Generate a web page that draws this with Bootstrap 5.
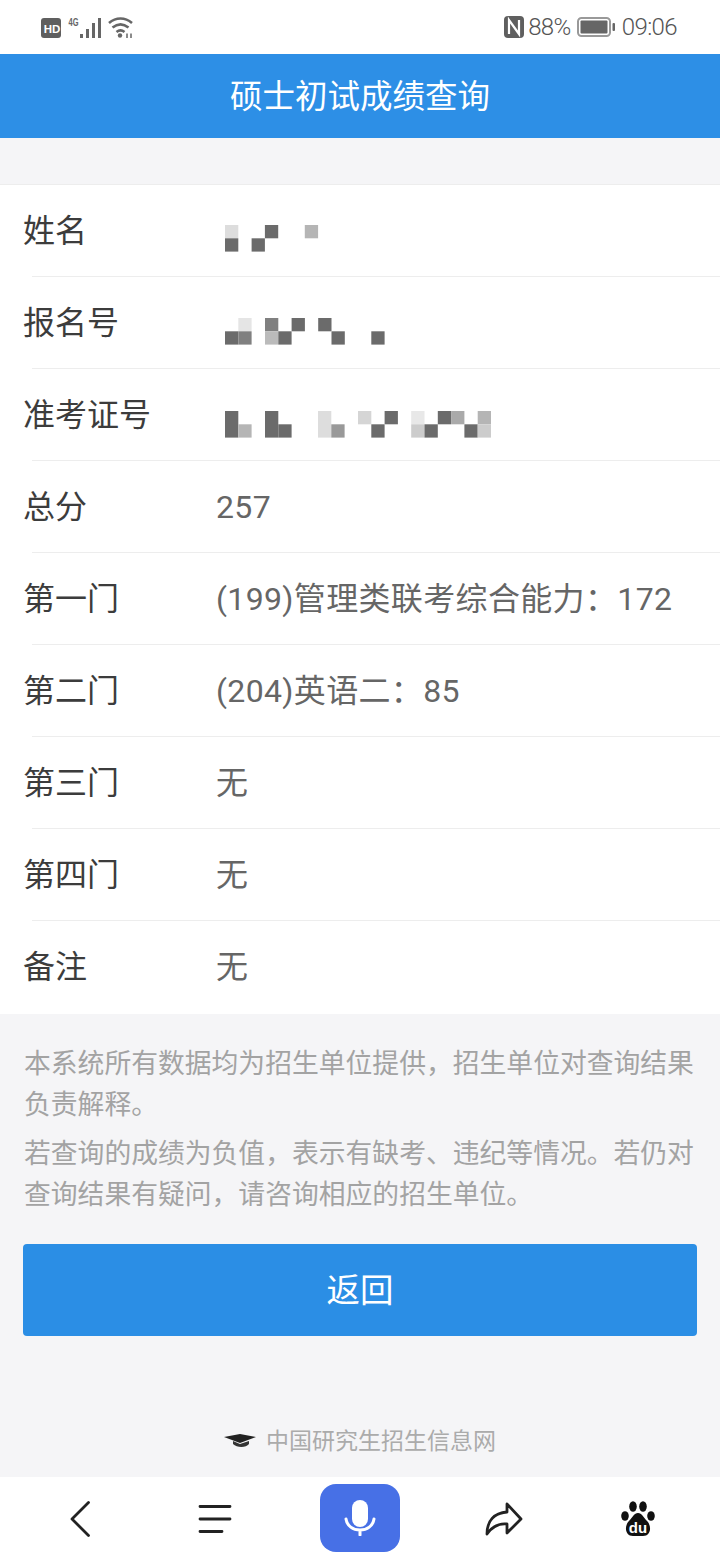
<!doctype html>
<html lang="zh-CN"><head><meta charset="utf-8"><title>硕士初试成绩查询</title>
<link href="https://cdn.jsdelivr.net/npm/bootstrap@5.3.0/dist/css/bootstrap.min.css" rel="stylesheet">
<style>
html,body{height:100%}
body{width:720px;height:1560px;overflow:hidden;background:#f5f5f7;font-family:"Liberation Sans","Noto Sans CJK SC",sans-serif;}
.statusbar{height:54px;background:#fff;padding:0 43px 0 41px;color:#6e6e6e}
.statusbar .txt{font-family:Roboto,"Noto Sans",sans-serif;font-size:24px;font-weight:300;line-height:1;color:#555;letter-spacing:-.6px}
.stat-nfc{margin-right:4px}
.stat-bat{margin:0 6px 0 6px}
.headbar{height:84px;background:#2d8fe6;color:#fff;font-size:32.5px;font-family:"Noto Sans CJK SC",sans-serif;padding-bottom:4px}
.gapbar{height:46px}
.sheet{background:#fff;height:830px}
.list-group-flush .sheet-row{height:92px;border-width:1px 0 0;border-style:solid;border-color:#ededed;margin-left:32px;padding:0;background:transparent;display:flex;align-items:flex-start}
.sheet-row .lbl{width:193px;margin-left:-9px;padding-top:23px;font-size:32px;line-height:40px;color:#3c3c3c;font-family:"Noto Sans CJK SC",sans-serif;font-weight:400}
.sheet-row .val{padding-top:26px;font-size:32px;line-height:40px;color:#666;font-family:Roboto,"Noto Sans CJK SC",sans-serif;white-space:nowrap;letter-spacing:.35px}
.list-group-flush .first-row{margin-left:0}
.first-row .lbl{margin-left:23px}
.blur{display:block;margin-left:9px}
.blur-a{margin-top:40px}
.blur-b{margin-top:41px}
.blur-c{margin-top:42px}
.notes{padding:27px 24px 0;color:#a3a3a3;font-size:26.8px;line-height:41px;font-family:"Noto Sans CJK SC",sans-serif;height:230px}
.notes p{margin:0 0 8px}
.backbtn{display:block;margin:0 23px;width:674px;height:92px;background:#2b8ee5;border:0;border-radius:4px;color:#fff;font-size:33.5px;font-family:"Noto Sans CJK SC",sans-serif;padding:0 0 4px}
.backbtn:hover{background:#2b8ee5;color:#fff}
.brand{height:141px;padding-top:86px;color:#ababab;font-size:23px;font-family:"Noto Sans CJK SC",sans-serif;line-height:34px}
.brand-inner{height:34px}
.toolbar{height:83px;background:#fff;position:relative}
.tool{position:absolute;top:0;height:83px;display:flex;align-items:center;justify-content:center}
.tool-back{left:60px;width:40px}
.tool-menu{left:195px;width:40px}
.tool-mic{left:320px;width:80px;padding-bottom:2px}
.tool-share{left:484px;width:40px}
.tool-baidu{left:618px;width:40px}
.micbox{width:80px;height:68px;background:#4770e6;border-radius:16px}
</style></head><body>
<div class="statusbar d-flex align-items-center justify-content-between">
 <svg width="94" height="26" viewBox="0 0 94 26">
   <rect x="0" y="4" width="20" height="20" rx="3" fill="#5f5f5f"/>
   <text x="2.800" y="18.500" font-size="11.500" font-weight="700" fill="#fff" font-family="Liberation Sans">HD</text>
   <text x="27.500" y="11.500" font-size="10" font-weight="700" fill="#666" font-family="Liberation Sans" textLength="10" lengthAdjust="spacingAndGlyphs">4G</text>
   <g fill="#666"><rect x="39" y="20" width="3" height="4"/><rect x="45" y="15" width="3" height="9"/><rect x="51" y="9" width="3" height="15"/><rect x="57" y="4" width="3" height="20"/></g>
   <g fill="none" stroke="#666" stroke-width="2.600"><path d="M68 9c7-6 16-6 23 0"/><path d="M71.500 13.500c5-4 11-4 16 0"/><path d="M75.500 18c2.500-2 5.500-2 8 0"/></g>
   <circle cx="79" cy="21.500" r="2.200" fill="#666"/><path d="M86 19.500v4.500M90 19.500v4.500" stroke="#666" stroke-width="1.500"/>
 </svg>
 <div class="d-flex align-items-center">
  <svg class="stat-nfc" width="20" height="24" viewBox="0 0 20 24"><rect width="20" height="22" y="1" rx="4" fill="#5f5f5f"/><path d="M5 19V5l10 14V5" fill="none" stroke="#fff" stroke-width="2.200"/></svg>
  <span class="txt">88%</span>
  <svg class="stat-bat" width="39" height="22" viewBox="0 0 39 22"><rect x="1" y="2" width="32" height="18" rx="3.500" fill="none" stroke="#999" stroke-width="2"/><rect x="3.500" y="4.500" width="27" height="13" rx="1" fill="#666"/><rect x="35.500" y="7" width="2.500" height="8" rx="1" fill="#666"/></svg>
  <span class="txt">09:06</span>
 </div>
</div>
<div class="headbar d-flex align-items-center justify-content-center">硕士初试成绩查询</div>
<div class="gapbar"></div>
<div class="sheet list-group list-group-flush rounded-0">
 <div class="list-group-item sheet-row first-row"><div class="lbl">姓名</div><svg class="blur blur-a" width="120" height="30" viewBox="0 0 120 30">
   <rect width="13.300" height="13.300" fill="#ddd"/><rect y="13.300" width="13.300" height="13.300" fill="#6b6b6b"/><rect x="26.600" y="13.300" width="13.300" height="13.300" fill="#6b6b6b"/><rect x="39.900" width="13.300" height="13.300" fill="#6b6b6b"/><rect x="79.800" width="13.300" height="13.300" fill="#b5b5b5"/></svg></div>
 <div class="list-group-item sheet-row"><div class="lbl">报名号</div><svg class="blur blur-b" width="180" height="30" viewBox="0 0 180 30">
   <rect x="13.300" width="13.300" height="13.300" fill="#e5e5e5"/><rect y="13.300" width="13.300" height="13.300" fill="#6b6b6b"/><rect x="13.300" y="13.300" width="13.300" height="13.300" fill="#808080"/><rect x="40" width="13.300" height="13.300" fill="#808080"/><rect x="40" y="13.300" width="13.300" height="13.300" fill="#bbb"/><rect x="53.300" y="13.300" width="13.300" height="13.300" fill="#6b6b6b"/><rect x="66.600" width="13.300" height="13.300" fill="#6b6b6b"/><rect x="93.200" width="13.300" height="13.300" fill="#6b6b6b"/><rect x="106.500" y="13.300" width="13.300" height="13.300" fill="#6b6b6b"/><rect x="146.300" y="13.300" width="13.300" height="13.300" fill="#6b6b6b"/></svg></div>
 <div class="list-group-item sheet-row"><div class="lbl">准考证号</div><svg class="blur blur-c" width="290" height="30" viewBox="0 0 290 30">
   <rect width="13.300" height="26.600" fill="#6b6b6b"/><rect x="13.300" y="13.300" width="13.300" height="13.300" fill="#b5b5b5"/><rect x="40" width="13.300" height="26.600" fill="#6b6b6b"/><rect x="53.300" y="13.300" width="13.300" height="13.300" fill="#6b6b6b"/><rect x="93" width="13.300" height="26.600" fill="#ddd"/><rect x="106.300" y="13.300" width="13.300" height="13.300" fill="#999"/><rect x="133" width="13.300" height="13.300" fill="#d5d5d5"/><rect x="146.300" y="13.300" width="13.300" height="13.300" fill="#6b6b6b"/><rect x="159.600" width="13.300" height="13.300" fill="#6b6b6b"/><rect x="186.200" width="13.300" height="13.300" fill="#e8e8e8"/><rect x="186.200" y="13.300" width="13.300" height="13.300" fill="#ccc"/><rect x="199.500" y="13.300" width="13.300" height="13.300" fill="#6b6b6b"/><rect x="212.800" width="13.300" height="13.300" fill="#6b6b6b"/><rect x="226.100" width="13.300" height="13.300" fill="#aaa"/><rect x="239.400" y="13.300" width="13.300" height="13.300" fill="#6b6b6b"/><rect x="252.700" width="13.300" height="13.300" fill="#b5b5b5"/><rect x="252.700" y="13.300" width="13.300" height="13.300" fill="#ccc"/></svg></div>
 <div class="list-group-item sheet-row"><div class="lbl">总分</div><div class="val">257</div></div>
 <div class="list-group-item sheet-row"><div class="lbl">第一门</div><div class="val">(199)管理类联考综合能力：172</div></div>
 <div class="list-group-item sheet-row"><div class="lbl">第二门</div><div class="val">(204)英语二：85</div></div>
 <div class="list-group-item sheet-row"><div class="lbl">第三门</div><div class="val">无</div></div>
 <div class="list-group-item sheet-row"><div class="lbl">第四门</div><div class="val">无</div></div>
 <div class="list-group-item sheet-row"><div class="lbl">备注</div><div class="val">无</div></div>
</div>
<div class="notes">
 <p>本系统所有数据均为招生单位提供，招生单位对查询结果负责解释。</p>
 <p>若查询的成绩为负值，表示有缺考、违纪等情况。若仍对查询结果有疑问，请咨询相应的招生单位。</p>
</div>
<button type="button" class="btn backbtn">返回</button>
<div class="brand d-flex justify-content-center">
 <div class="brand-inner d-flex align-items-center">
  <svg width="34" height="20" viewBox="0 0 34 20" class="me-2"><path d="M0 8l16-3 16 3-16 6z" fill="#222"/><path d="M9 12v3c4 4 13 4 16 0v-3l-9 3z" fill="#333"/></svg>
  <span>中国研究生招生信息网</span>
 </div>
</div>
<div class="toolbar">
 <div class="tool tool-back"><svg width="20" height="36" viewBox="0 0 20 36"><path d="M18.500 1.500 2 18l16.500 16.500" fill="none" stroke="#222" stroke-width="2.800" stroke-linecap="round" stroke-linejoin="round"/></svg></div>
 <div class="tool tool-menu"><svg width="34" height="30" viewBox="0 0 34 30"><path d="M2 2.500h30M2 15h30M2 27.500h22" fill="none" stroke="#222" stroke-width="2.800" stroke-linecap="round"/></svg></div>
 <div class="tool tool-mic"><div class="micbox d-flex align-items-center justify-content-center"><svg width="32" height="36" viewBox="0 0 32 36"><rect x="8" y="0" width="16" height="27" rx="8" fill="#fff"/><path d="M2 19c1 7 7 11 14 11s13-4 14-11M16 30v5" fill="none" stroke="#fff" stroke-width="3" stroke-linecap="round"/></svg></div></div>
 <div class="tool tool-share"><svg width="38" height="34" viewBox="0 0 38 34"><path d="M2 32C2 19 9 11 22 10V2l14 15-14 14V22C13 21 7 25 2 32Z" fill="none" stroke="#222" stroke-width="2.800" stroke-linejoin="round"/></svg></div>
 <div class="tool tool-baidu"><svg width="34" height="36" viewBox="0 0 34 36"><g fill="#111"><ellipse cx="4" cy="15" rx="3.800" ry="4.800"/><ellipse cx="12" cy="5.500" rx="3.800" ry="5.200"/><ellipse cx="22" cy="5.500" rx="3.800" ry="5.200"/><ellipse cx="30" cy="15" rx="3.800" ry="4.800"/><path d="M17 12c-4 0-5 4-9 8-5 5-4 15 4 15h10c8 0 9-10 4-15-4-4-5-8-9-8Z"/></g><text x="17" y="32" text-anchor="middle" font-size="15" font-weight="700" fill="#fff" font-family="Liberation Sans">du</text></svg></div>
</div>
</body></html>
